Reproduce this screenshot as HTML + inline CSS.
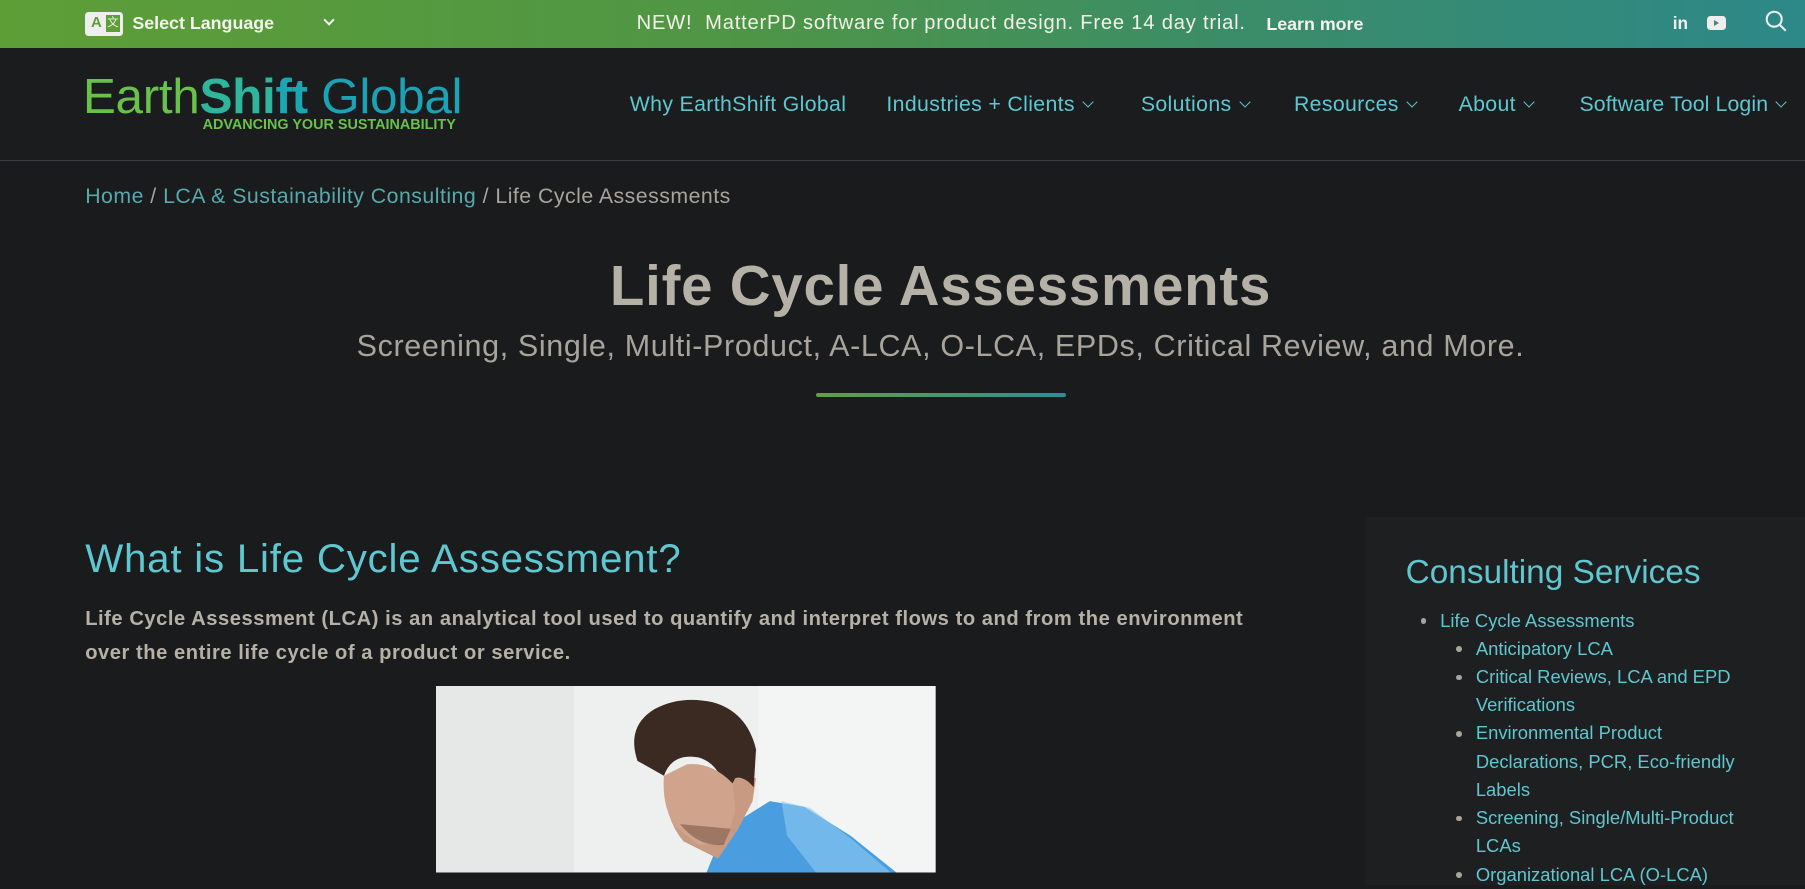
<!DOCTYPE html>
<html><head><meta charset="utf-8">
<style>
html{zoom:1.1512}
*{margin:0;padding:0;box-sizing:border-box}
body{width:1568px;height:758px;overflow:hidden;background:#1a1b1d;font-family:"Liberation Sans",sans-serif;position:relative}
.abs{position:absolute;white-space:nowrap}
.top{position:absolute;left:0;top:0;width:1568px;height:42px;background:linear-gradient(90deg,#5e9e37 0%,#4f9645 40%,#3a8c6a 70%,#2d8888 100%)}
.hdr{position:absolute;left:0;top:42px;width:1568px;height:98px;background:#1b1c1e;border-bottom:1px solid #3a3b3e}
.nav{color:#5ec7cf;font-size:18.5px;top:80px;letter-spacing:0.3px}
.chev{display:inline-block;width:7px;height:7px;border-right:1.5px solid #5ec7cf;border-bottom:1.5px solid #5ec7cf;transform:rotate(45deg);margin-left:8px;position:relative;top:-4px}
ul{list-style:none}
.sb li{position:relative;color:#5ec7cf;font-size:16px;line-height:24.5px}
.sb li:before{content:"";position:absolute;left:-17px;top:10px;width:5px;height:5px;border-radius:50%;background:#a8a49c}
</style></head><body>
<div class="top"></div>
<div class="abs" style="left:74px;top:10px;width:33px;height:21px;background:#eee;border-radius:3px"></div>
<div class="abs" style="left:79px;top:12px;font-size:13px;font-weight:bold;color:#5e9e37">A</div>
<div class="abs" style="left:92px;top:13px;width:12px;height:15px;background:#5e9e37;color:#eee;font-size:10px;text-align:center;line-height:15px">文</div>
<div class="abs" style="left:115px;top:11px;font-size:15.5px;font-weight:bold;color:#f4f4ee">Select Language</div>
<div class="abs" style="left:282px;top:14px;width:7px;height:7px;border-right:2px solid #f4f4ee;border-bottom:2px solid #f4f4ee;transform:rotate(45deg)"></div>
<div class="abs" style="left:553px;top:10px;font-size:17.5px;color:#f2f2e8;letter-spacing:0.7px">NEW!&nbsp; MatterPD software for product design. Free 14 day trial.</div>
<div class="abs" style="left:1100px;top:12px;font-size:15.5px;font-weight:bold;color:#f4f4ee">Learn more</div>
<div class="abs" style="left:1453px;top:11px;font-size:15px;font-weight:bold;color:#eee">in</div>
<div class="abs" style="left:1483px;top:14px;width:16px;height:12px;background:#eee;border-radius:3px"></div>
<div class="abs" style="left:1489px;top:17px;width:0;height:0;border-left:5px solid #3a8c78;border-top:3px solid transparent;border-bottom:3px solid transparent"></div>
<svg class="abs" style="left:1533px;top:9px" width="20" height="20" viewBox="0 0 20 20"><circle cx="8" cy="8" r="6.5" fill="none" stroke="#eee" stroke-width="1.8"/><line x1="13" y1="13" x2="18" y2="18" stroke="#eee" stroke-width="1.8"/></svg>

<div class="hdr"></div>
<div class="abs" style="left:72px;top:60px;font-size:43px;line-height:48px;letter-spacing:-0.3px"><span style="color:#68c14b">Earth</span><span style="color:#2fb59c;font-weight:bold">Shi</span><span style="color:#1aa7b3;font-weight:bold">ft</span> <span style="color:#1aa3b5">Global</span></div>
<div class="abs" style="left:176px;top:102px;font-size:12.5px;font-weight:bold;color:#68c14b">ADVANCING YOUR SUSTAINABILITY</div>
<div class="abs nav" style="left:547px">Why EarthShift Global</div>
<div class="abs nav" style="left:770px">Industries + Clients<span class="chev"></span></div>
<div class="abs nav" style="left:991px">Solutions<span class="chev"></span></div>
<div class="abs nav" style="left:1124px">Resources<span class="chev"></span></div>
<div class="abs nav" style="left:1267px">About<span class="chev"></span></div>
<div class="abs nav" style="left:1372px;letter-spacing:0.1px">Software Tool Login<span class="chev"></span></div>

<div class="abs" style="left:74px;top:160px;font-size:18.5px;color:#a8a49c;letter-spacing:0.42px"><span style="color:#58a9ac">Home</span> / <span style="color:#58a9ac">LCA &amp; Sustainability Consulting</span> / Life Cycle Assessments</div>
<div class="abs" style="left:0;width:1634px;text-align:center;top:220px;font-size:49px;font-weight:bold;color:#b6b1a6;letter-spacing:0.7px">Life Cycle Assessments</div>
<div class="abs" style="left:0;width:1634px;text-align:center;top:286px;font-size:26.5px;color:#a8a49c;letter-spacing:0.55px">Screening, Single, Multi-Product, A-LCA, O-LCA, EPDs, Critical Review, and More.</div>
<div class="abs" style="left:709px;top:341px;width:217px;height:4px;border-radius:2px;background:linear-gradient(90deg,#5fa23f,#2a8f98)"></div>

<div class="abs" style="left:74px;top:466px;font-size:35px;color:#5ec7cf;letter-spacing:0.67px">What is Life Cycle Assessment?</div>
<div class="abs" style="left:74px;top:524px;font-size:17.5px;font-weight:bold;color:#b6b1a6;line-height:29px;letter-spacing:0.48px">Life Cycle Assessment (LCA) is an analytical tool used to quantify and interpret flows to and from the environment<br>over the entire life cycle of a product or service.</div>

<svg class="abs" style="left:379px;top:596px" width="434" height="162" viewBox="0 0 434 162">
<rect width="434" height="162" fill="#eef0ef"/>
<rect x="0" width="120" height="162" fill="#e6e8e7"/>
<rect x="280" width="154" height="162" fill="#f3f4f4"/>
<path d="M290 100 L320 105 L360 130 L400 162 L235 162 L250 125 Z" fill="#4a9ee0"/>
<path d="M300 100 L325 106 L360 132 L395 162 L330 162 L305 130 Z" fill="#8fcaf2" opacity="0.6"/>
<path d="M198 80 Q198 115 215 135 L245 150 L262 125 L275 100 L278 80 Z" fill="#c89a82"/>
<path d="M175 65 Q165 35 190 20 Q212 8 240 14 Q270 22 278 55 L276 88 Q268 78 260 80 L252 95 Q248 68 228 62 Q205 58 198 78 Z" fill="#3a2a22"/>
<path d="M198 78 Q196 105 208 122 L228 138 L252 136 L260 108 L258 85 Q240 66 218 68 Z" fill="#d0a48c"/>
<path d="M212 120 Q228 140 250 138 L256 124 Z" fill="#6a4a3a" opacity="0.5"/>
</svg>

<div class="abs" style="left:1186px;top:449px;width:382px;height:320px;background:#1e1f21"></div>
<div class="abs" style="left:1221px;top:481px;font-size:29px;color:#5ec7cf">Consulting Services</div>
<ul class="sb abs" style="left:1251px;top:527px">
<li>Life Cycle Assessments
<ul style="margin-left:31px">
<li>Anticipatory LCA</li>
<li>Critical Reviews, LCA and EPD<br>Verifications</li>
<li>Environmental Product<br>Declarations, PCR, Eco-friendly<br>Labels</li>
<li>Screening, Single/Multi-Product<br>LCAs</li>
<li>Organizational LCA (O-LCA)</li>
</ul></li>
</ul>
</body></html>
